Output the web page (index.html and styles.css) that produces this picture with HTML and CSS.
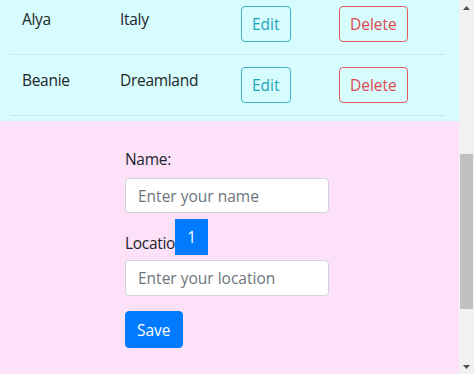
FILE: index.html
```html
<!DOCTYPE html>
<html lang="en">
<head>
<meta charset="utf-8">
<title>People</title>
<link rel="stylesheet" href="styles.css">
</head>
<body>
<div class="window">
  <div class="page">
    <section class="list-section">
      <table class="people">
        <tbody>
          <tr>
            <td class="cell-text">Alya</td>
            <td class="cell-text c-loc">Italy</td>
            <td class="c-edit"><button class="btn btn-info">Edit</button></td>
            <td class="c-del"><button class="btn btn-danger">Delete</button></td>
          </tr>
          <tr>
            <td class="cell-text">Beanie</td>
            <td class="cell-text c-loc">Dreamland</td>
            <td class="c-edit"><button class="btn btn-info">Edit</button></td>
            <td class="c-del"><button class="btn btn-danger">Delete</button></td>
          </tr>
        </tbody>
      </table>
    </section>
    <section class="form-section">
      <form class="person-form">
        <div class="form-group group-name">
          <label class="label">Name:</label>
          <input class="input" type="text" placeholder="Enter your name">
        </div>
        <div class="form-group group-location">
          <label class="label">Location:</label>
          <span class="badge">1</span>
          <input class="input" type="text" placeholder="Enter your location">
        </div>
        <button type="button" class="btn-save">Save</button>
      </form>
    </section>
  </div>
  <div class="scrollbar">
    <div class="sb-btn">
      <svg width="7" height="4" viewBox="0 0 7 4"><path d="M0 4 L3.5 0 L7 4 Z" fill="#505050"/></svg>
    </div>
    <div class="sb-track"><div class="sb-thumb"></div></div>
    <div class="sb-btn">
      <svg width="7" height="4" viewBox="0 0 7 4"><path d="M0 0 L3.5 4 L7 0 Z" fill="#505050"/></svg>
    </div>
  </div>
</div>
</body>
</html>
```
FILE: styles.css
```css
html, body {
  margin: 0;
  padding: 0;
  overflow: hidden;
}
body {
  font-family: "Open Sans", "Noto Sans", "Liberation Sans", sans-serif;
  font-size: 15.5px;
  line-height: 24px;
  letter-spacing: -0.3px;
  color: #212529;
}
.window {
  display: flex;
  height: 374px;
  width: 474px;
}
.page {
  flex: 1;
  display: flex;
  flex-direction: column;
  overflow: hidden;
}
.list-section {
  background: #d6fcfd;
  padding: 0 14px 5px 10px;
}
.people {
  width: 100%;
  border-collapse: collapse;
  margin-top: -6px;
}
.people td {
  padding: 12px;
  vertical-align: top;
  border-bottom: 1px solid #c9e6e8;
  height: 36px;
}
.people td.cell-text {
  padding-top: 13px;
  padding-bottom: 11px;
  width: 74px;
}
.people td.c-loc { width: 97px; }
.c-edit { width: 74px; }
.btn {
  font: inherit;
  height: 36px;
  line-height: 22px;
  padding: 0 10px;
  border-radius: 4px;
  background: transparent;
  cursor: pointer;
}
.btn-info {
  color: #1ea5bb;
  border: 1px solid #3fb3c6;
}
.btn-danger {
  color: #e04850;
  border: 1px solid #e25a60;
}
.form-section {
  flex: 1;
  background: #fde1f9;
  padding: 26px 0 0 125px;
}
.person-form {
  width: 204px;
}
.form-group {
  position: relative;
}
.group-name {
  margin-bottom: 18px;
}
.group-name .label {
  margin-bottom: 7px;
}
.group-location {
  margin-bottom: 15px;
}
.group-location .label {
  margin-bottom: 5px;
}
.label {
  display: block;
}
.input {
  display: block;
  box-sizing: border-box;
  width: 204px;
  height: 36px;
  padding: 0 12px;
  font: inherit;
  color: #495057;
  background: #fff;
  border: 1px solid #ced4da;
  border-radius: 4px;
}
.group-name .input {
  height: 35px;
}
.input::placeholder {
  color: #6c757d;
}
.badge {
  position: absolute;
  left: 50px;
  top: -12px;
  width: 33px;
  height: 36px;
  background: #007bff;
  color: #fff;
  display: flex;
  align-items: center;
  justify-content: center;
}
.btn-save {
  font: inherit;
  height: 37px;
  line-height: 24px;
  padding: 0 11px;
  color: #fff;
  background: #007bff;
  border: 1px solid #007bff;
  border-radius: 4px;
}
.scrollbar {
  width: 15px;
  background: #f1f1f1;
  display: flex;
  flex-direction: column;
}
.sb-btn {
  height: 15px;
  display: flex;
  align-items: center;
  justify-content: center;
}
.sb-track {
  flex: 1;
  padding-top: 139px;
}
.sb-thumb {
  height: 155px;
  margin: 0 1px 0 1px;
  background: #c1c1c1;
}
```
